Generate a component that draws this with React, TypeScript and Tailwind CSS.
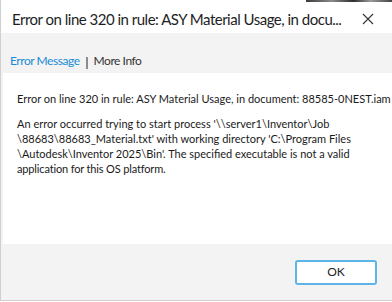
export default function App() {
  return (
    <div className="relative h-[302px] w-[392px] overflow-hidden bg-white font-['Lato',sans-serif]">
      {/* sliver of whatever sits behind the dialog */}
      <div className="absolute right-0 top-0 h-[2px] w-[86px] bg-[linear-gradient(90deg,#3a3a3a,#8a8a8a_30%,#2e2e2e_55%,#9a9a9a_75%,#444)]" />
      <div className="flex h-[301px] flex-col border-b border-l border-[#cfcfcf] pt-[2px]">
        <div className="flex h-[31px] items-center justify-between bg-white pl-[11px] pr-[18px] pt-[3px]">
          <span className="whitespace-nowrap text-[15px] tracking-[-0.5px] text-[#1e1e1e]">
            Error on line 320 in rule: ASY Material Usage, in docu...
          </span>
          <svg width="12" height="12" viewBox="0 0 12 12" className="text-[#333]">
            <path d="M1 1 L11 11 M11 1 L1 11" stroke="currentColor" strokeWidth="1.1" />
          </svg>
        </div>
        <div className="flex flex-1 flex-col bg-[#f3f3f3]">
          <div className="flex h-[40px] items-end pb-[3px] pl-[9px] text-[12px] tracking-[-0.45px]">
            <span className="text-[#1a8bd6]">Error Message</span>
            <span className="mx-[6px] mb-[1px] h-[12px] w-[2px] bg-[#8c8c8c]" />
            <span className="text-[#333]">More Info</span>
          </div>
          <div className="ml-[2px] h-[171px] whitespace-nowrap bg-white px-[14px] pt-[18px] text-[11px] leading-[15px] text-[#1a1a1a]">
            <p>Error on line 320 in rule: ASY Material Usage, in document: 88585-0NEST.iam</p>
            <div className="mt-[10px]">
              <p>An error occurred trying to start process '\\server1\Inventor\Job</p>
              <p>\88683\88683_Material.txt' with working directory 'C:\Program Files</p>
              <p>\Autodesk\Inventor 2025\Bin'. The specified executable is not a valid</p>
              <p className="tracking-[-0.15px]">application for this OS platform.</p>
            </div>
          </div>
          <div className="flex flex-1 items-center justify-end pr-[15px]">
            <button className="h-[25px] w-[82px] rounded-[3px] border-2 border-[#5db4e6] bg-white text-[12px] text-[#222]">
              OK
            </button>
          </div>
        </div>
      </div>
    </div>
  );
}
